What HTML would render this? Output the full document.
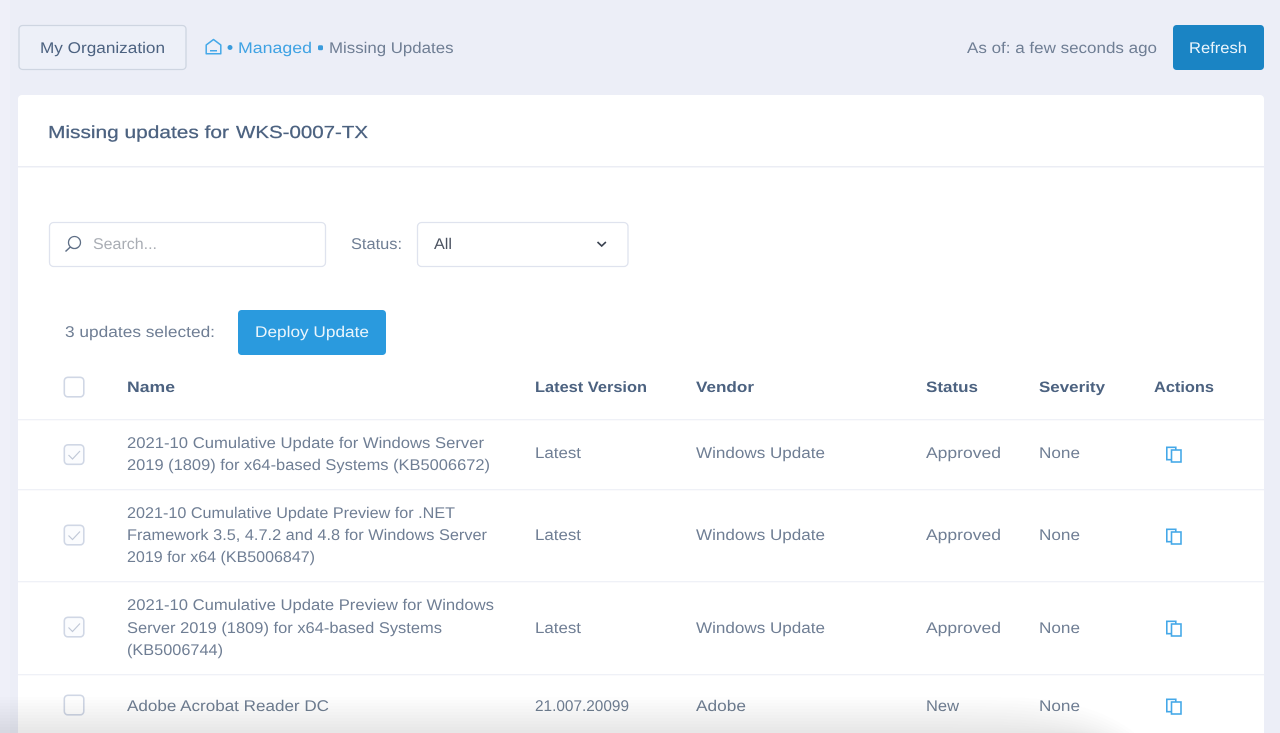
<!DOCTYPE html>
<html lang="en">
<head>
<meta charset="utf-8">
<title>Missing Updates</title>
<style>
html,body{margin:0;padding:0;background:#eceef7;width:1280px;height:733px;overflow:hidden}
svg{display:block;position:absolute;left:0;top:0}
text{font-family:"Liberation Sans",sans-serif;font-size:15.5px;fill:#6f7e94;text-rendering:geometricPrecision}
.d{fill:#4c6280}
.h{font-weight:bold;fill:#4c6280;font-size:15px}
.w{fill:#eaf5fc}
.b{fill:#3fa2e3}
.s path{fill:#000;fill-opacity:.009}
</style>
</head>
<body>
<svg width="1280" height="733" viewBox="0 0 1280 733" xmlns="http://www.w3.org/2000/svg">
<defs>
<g id="copy" fill="none" stroke="#45a8e8" stroke-width="1.600">
<path d="M5 13.200H.8V.8H9.800V3"/>
<rect x="5.500" y="3.500" width="9.500" height="12" fill="#fff"/>
</g>
<g id="cb"><rect x="64.300" y="0.300" width="19.500" height="19.500" rx="3.500" fill="#fff" stroke="#d0d7e5" stroke-width="1.600"/></g>
<g id="cbc"><rect x="64.300" y="0.300" width="19.500" height="19.500" rx="3.500" fill="#fbfcfe" stroke="#d0d7e5" stroke-width="1.600"/><path d="M68.500 10.500l4 4 7.500-8" fill="none" stroke="#c0c8d7" stroke-width="1.200"/></g>
</defs>

<rect width="1280" height="733" fill="#eceef7"/>
<rect x="0" y="0" width="10" height="733" fill="#eff0f9"/>

<!-- Top bar -->
<rect x="19" y="25.500" width="167" height="44" rx="3.500" fill="#edf0f8" stroke="#ced5e1" stroke-width="1.300"/>
<text x="40" y="53" class="d" textLength="125" lengthAdjust="spacingAndGlyphs">My Organization</text>
<path d="M206.200 45 213.500 39.500 220.800 45V53.800H206.200ZM210 50.800H217" fill="none" stroke="#45a8e8" stroke-width="1.500" stroke-linejoin="round"/>
<circle cx="230" cy="47.500" r="2.500" fill="#3a9bdc"/>
<text x="238" y="53" class="b" textLength="74" lengthAdjust="spacingAndGlyphs">Managed</text>
<rect x="318" y="45.200" width="5" height="5" rx="1.500" fill="#3a9bdc"/>
<text x="329" y="53" textLength="124.500" lengthAdjust="spacingAndGlyphs">Missing Updates</text>
<text x="967" y="53" textLength="190" lengthAdjust="spacingAndGlyphs">As of: a few seconds ago</text>
<rect x="1173" y="25" width="91" height="45" rx="3.500" fill="#1a84c4"/>
<text x="1189" y="53" class="w" textLength="58" lengthAdjust="spacingAndGlyphs">Refresh</text>

<!-- Card -->
<path d="M18 733V99a4 4 0 0 1 4-4H1260a4 4 0 0 1 4 4V733Z" fill="#fff"/>
<rect x="18" y="166" width="1246" height="1.500" fill="#ebedf4"/>
<text x="48" y="138" style="font-size:17.500px;fill:#4c6280;stroke:#4c6280;stroke-width:.25px" textLength="181" lengthAdjust="spacingAndGlyphs">Missing updates for</text>
<text x="236" y="138" style="font-size:17.500px;fill:#4c6280;stroke:#4c6280;stroke-width:.25px" textLength="132" lengthAdjust="spacingAndGlyphs">WKS-0007-TX</text>

<!-- Filters -->
<rect x="49.500" y="222.500" width="276" height="44" rx="4" fill="#fff" stroke="#dfe3ee" stroke-width="1.300"/>
<circle cx="74.500" cy="242.500" r="6" fill="none" stroke="#5f6f86" stroke-width="1.300"/>
<path d="M70.300 247 65.500 251.500" stroke="#5f6f86" stroke-width="1.500" fill="none"/>
<text x="93" y="249" style="fill:#a9adb4" textLength="64" lengthAdjust="spacingAndGlyphs">Search...</text>
<text x="351" y="249" textLength="51" lengthAdjust="spacingAndGlyphs">Status:</text>
<rect x="417.500" y="222.500" width="210.500" height="44" rx="4" fill="#fff" stroke="#dfe3ee" stroke-width="1.300"/>
<text x="434" y="249" style="fill:#4a5260" textLength="18" lengthAdjust="spacingAndGlyphs">All</text>
<path d="M597.500 242 601.700 246 605.900 242" fill="none" stroke="#3a4250" stroke-width="1.600"/>

<text x="65" y="337" textLength="150" lengthAdjust="spacingAndGlyphs">3 updates selected:</text>
<rect x="238" y="310" width="148" height="45" rx="3.500" fill="#2a9ade"/>
<text x="255" y="337" class="w" textLength="114" lengthAdjust="spacingAndGlyphs">Deploy Update</text>

<!-- Table header -->
<use href="#cb" y="377"/>
<text x="127" y="392" class="h" textLength="48" lengthAdjust="spacingAndGlyphs">Name</text>
<text x="535" y="392" class="h" textLength="112" lengthAdjust="spacingAndGlyphs">Latest Version</text>
<text x="696" y="392" class="h" textLength="58" lengthAdjust="spacingAndGlyphs">Vendor</text>
<text x="926" y="392" class="h" textLength="52" lengthAdjust="spacingAndGlyphs">Status</text>
<text x="1039" y="392" class="h" textLength="66" lengthAdjust="spacingAndGlyphs">Severity</text>
<text x="1154" y="392" class="h" textLength="60" lengthAdjust="spacingAndGlyphs">Actions</text>

<rect x="18" y="419" width="1246" height="1.300" fill="#eff1f7"/>
<rect x="18" y="489" width="1246" height="1.300" fill="#eff1f7"/>
<rect x="18" y="581" width="1246" height="1.300" fill="#eff1f7"/>
<rect x="18" y="674" width="1246" height="1.300" fill="#eff1f7"/>

<!-- Row 1 -->
<use href="#cbc" y="444.500"/>
<text x="127" y="448" textLength="357" lengthAdjust="spacingAndGlyphs">2021-10 Cumulative Update for Windows Server</text>
<text x="127" y="470" textLength="363" lengthAdjust="spacingAndGlyphs">2019 (1809) for x64-based Systems (KB5006672)</text>
<text x="535" y="458" textLength="46" lengthAdjust="spacingAndGlyphs">Latest</text>
<text x="696" y="458" textLength="129" lengthAdjust="spacingAndGlyphs">Windows Update</text>
<text x="926" y="458" textLength="75" lengthAdjust="spacingAndGlyphs">Approved</text>
<text x="1039" y="458" textLength="41" lengthAdjust="spacingAndGlyphs">None</text>
<use href="#copy" x="1166" y="446.500"/>

<!-- Row 2 -->
<use href="#cbc" y="525"/>
<text x="127" y="518" textLength="328" lengthAdjust="spacingAndGlyphs">2021-10 Cumulative Update Preview for .NET</text>
<text x="127" y="540" textLength="360" lengthAdjust="spacingAndGlyphs">Framework 3.5, 4.7.2 and 4.8 for Windows Server</text>
<text x="127" y="562" textLength="188" lengthAdjust="spacingAndGlyphs">2019 for x64 (KB5006847)</text>
<text x="535" y="540" textLength="46" lengthAdjust="spacingAndGlyphs">Latest</text>
<text x="696" y="540" textLength="129" lengthAdjust="spacingAndGlyphs">Windows Update</text>
<text x="926" y="540" textLength="75" lengthAdjust="spacingAndGlyphs">Approved</text>
<text x="1039" y="540" textLength="41" lengthAdjust="spacingAndGlyphs">None</text>
<use href="#copy" x="1166" y="528.500"/>

<!-- Row 3 -->
<use href="#cbc" y="617"/>
<text x="127" y="610" textLength="367" lengthAdjust="spacingAndGlyphs">2021-10 Cumulative Update Preview for Windows</text>
<text x="127" y="633" textLength="315" lengthAdjust="spacingAndGlyphs">Server 2019 (1809) for x64-based Systems</text>
<text x="127" y="655" textLength="96" lengthAdjust="spacingAndGlyphs">(KB5006744)</text>
<text x="535" y="633" textLength="46" lengthAdjust="spacingAndGlyphs">Latest</text>
<text x="696" y="633" textLength="129" lengthAdjust="spacingAndGlyphs">Windows Update</text>
<text x="926" y="633" textLength="75" lengthAdjust="spacingAndGlyphs">Approved</text>
<text x="1039" y="633" textLength="41" lengthAdjust="spacingAndGlyphs">None</text>
<use href="#copy" x="1166" y="620.500"/>

<!-- Row 4 -->
<use href="#cb" y="695"/>
<text x="127" y="711" textLength="202" lengthAdjust="spacingAndGlyphs">Adobe Acrobat Reader DC</text>
<text x="535" y="711" textLength="94" lengthAdjust="spacingAndGlyphs">21.007.20099</text>
<text x="696" y="711" textLength="50" lengthAdjust="spacingAndGlyphs">Adobe</text>
<text x="926" y="711" textLength="33" lengthAdjust="spacingAndGlyphs">New</text>
<text x="1039" y="711" textLength="41" lengthAdjust="spacingAndGlyphs">None</text>
<use href="#copy" x="1166" y="698.500"/>

<!-- Bottom shadow: stacked soft layers -->
<g class="s">
<path d="M0 733V697H1000Q1090 697 1135 733Z"/>
<path d="M0 733V700H995Q1085 700 1130 733Z"/>
<path d="M0 733V703H990Q1080 703 1125 733Z"/>
<path d="M0 733V706H985Q1075 706 1120 733Z"/>
<path d="M0 733V709H980Q1070 709 1115 733Z"/>
<path d="M0 733V712H975Q1065 712 1110 733Z"/>
<path d="M0 733V715H970Q1060 715 1105 733Z"/>
<path d="M0 733V718H965Q1055 718 1100 733Z"/>
<path d="M0 733V721H960Q1050 721 1095 733Z"/>
<path d="M0 733V724H955Q1045 724 1090 733Z"/>
<path d="M0 733V727H950Q1040 727 1085 733Z"/>
<path d="M0 733V730H945Q1035 730 1080 733Z"/>
</g>
</svg>
</body>
</html>
